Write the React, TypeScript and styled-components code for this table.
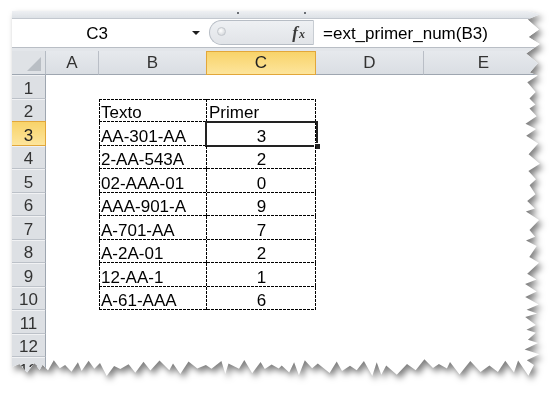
import React from 'react'
import styled, { createGlobalStyle, css } from 'styled-components';

const GlobalStyle = createGlobalStyle`
    html, body {
        margin: 0;
        padding: 0;
        background: #ffffff;
    }
    body {
        font-family: "Liberation Sans", Arial, sans-serif;
    }
`;

// torn paper edge (right + bottom), deterministic
function tornEdge(): string {
    let seed = 4242;
    const rnd = () => { seed = (seed * 16807) % 2147483647; return seed / 2147483647; };
    const pts: string[] = ['0px 0px', '516px 0px'];
    let y = 0;
    while (y < 340) {
        y += 3 + rnd() * 7;
        pts.push(`${(522 + rnd() * 6).toFixed(1)}px ${y.toFixed(1)}px`);
        y += 3 + rnd() * 8;
        pts.push(`${(512 + rnd() * 6).toFixed(1)}px ${y.toFixed(1)}px`);
    }
    pts.push('522px 354px');
    let x = 520;
    while (x > 10) {
        x -= 3 + rnd() * 8;
        pts.push(`${x.toFixed(1)}px ${(357 + rnd() * 8).toFixed(1)}px`);
        x -= 3 + rnd() * 9;
        pts.push(`${x.toFixed(1)}px ${(348 + rnd() * 7).toFixed(1)}px`);
    }
    pts.push('0px 356px');
    return `polygon(${pts.join(', ')})`;
}

const TORN = tornEdge();

const rows: [string, string][] = [
    ['', ''],
    ['Texto', 'Primer'],
    ['AA-301-AA', '3'],
    ['2-AA-543A', '2'],
    ['02-AAA-01', '0'],
    ['AAA-901-A', '9'],
    ['A-701-AA', '7'],
    ['A-2A-01', '2'],
    ['12-AA-1', '1'],
    ['A-61-AAA', '6'],
    ['', ''],
    ['', ''],
    ['', ''],
];

const columns = ['A', 'B', 'C', 'D', 'E'];

export default function App() {
    return (
        <>
            <GlobalStyle />
            <Page>
                <Shadow>
                    <Paper>
                        <TopStrip>
                            <Speck $x={225} />
                            <Speck $x={292} />
                        </TopStrip>

                        <FormulaBar>
                            <NameBox>C3</NameBox>
                            <DropButton><Arrow /></DropButton>
                            <Grip>
                                <Dimple />
                                <Fx>f<span>x</span></Fx>
                            </Grip>
                            <FormulaInput>=ext_primer_num(B3)</FormulaInput>
                        </FormulaBar>

                        <Divider />

                        <Sheet>
                            <Corner><CornerMark /></Corner>
                            {columns.map(c => (
                                <ColHeader key={c} $active={c === 'C'}>{c}</ColHeader>
                            ))}

                            {rows.map(([b, c], i) => {
                                const n = i + 1;
                                const inTable = n >= 2 && n <= 10;
                                return (
                                    <React.Fragment key={n}>
                                        <RowHeader $active={n === 3}>{n}</RowHeader>
                                        <Cell />
                                        <Cell $boxed={inTable} $top={n === 2} $left>{b}</Cell>
                                        <Cell $boxed={inTable} $top={n === 2} $center={n > 2}>
                                            {c}
                                            {n === 3 && <Selection><FillHandle /></Selection>}
                                        </Cell>
                                        <Cell />
                                        <Cell />
                                    </React.Fragment>
                                )
                            })}
                        </Sheet>
                    </Paper>
                </Shadow>
            </Page>
        </>
    )
}

const Page = styled.div`
    width: 560px;
    height: 398px;
    box-sizing: border-box;
    padding: 11px 0 0 12px;
    overflow: hidden;
    background: #ffffff;
`;

const Shadow = styled.div`
    width: 530px;
    height: 370px;
    filter: drop-shadow(3px 4px 3px rgba(0, 0, 0, 0.5));
`;

const Paper = styled.div`
    width: 530px;
    height: 370px;
    overflow: hidden;
    background: #ffffff;
    clip-path: ${TORN};
    display: flex;
    flex-direction: column;
`;

const TopStrip = styled.div`
    position: relative;
    flex: 0 0 8px;
    background: linear-gradient(to bottom, #eef0f3, #dde1e6);
    border-bottom: 1px solid #c3c8cf;
    box-sizing: border-box;
`;

const Speck = styled.span<{ $x: number }>`
    position: absolute;
    top: 1px;
    left: ${p => p.$x}px;
    width: 2px;
    height: 2px;
    background: #6b6f75;
`;

const FormulaBar = styled.div`
    flex: 0 0 28px;
    display: flex;
    align-items: stretch;
    background: #ffffff;
    font-size: 17px;
    color: #000;
`;

const NameBox = styled.div`
    width: 170px;
    display: flex;
    align-items: center;
    justify-content: center;
    padding-top: 1px;
`;

const DropButton = styled.div`
    width: 25px;
    display: flex;
    align-items: center;
    justify-content: center;
    padding-left: 3px;
    box-sizing: border-box;
`;

const Arrow = styled.span`
    width: 0;
    height: 0;
    border-left: 4px solid transparent;
    border-right: 4px solid transparent;
    border-top: 4px solid #1e1e1e;
`;

const Grip = styled.div`
    position: relative;
    width: 105px;
    margin: 1px 0 2px 2px;
    box-sizing: border-box;
    border: 1px solid #b7bdc5;
    border-radius: 13px 0 0 13px;
    background: linear-gradient(to bottom, #eef0f3, #e1e4e8);
    display: flex;
    align-items: center;
    justify-content: flex-end;
    padding-right: 8px;
    border-right: 1px solid #c8cdd3;
`;

const Dimple = styled.span`
    position: absolute;
    left: 7px;
    top: 6px;
    width: 7px;
    height: 7px;
    border-radius: 50%;
    background: radial-gradient(circle at 40% 40%, #ffffff, #c9cdd2);
    border: 1px solid #c3c7cc;
`;

const Fx = styled.span`
    font-family: "Liberation Serif", "Times New Roman", serif;
    font-style: italic;
    font-weight: bold;
    font-size: 17px;
    color: #3a3a3a;

    span {
        font-size: 12px;
        margin-left: 1px;
    }
`;

const FormulaInput = styled.div`
    flex: 1;
    display: flex;
    align-items: center;
    padding: 1px 0 0 8px;
    border-left: 1px solid #ffffff;
    white-space: nowrap;
`;

const Divider = styled.div`
    flex: 0 0 4px;
    box-sizing: border-box;
    border-top: 1px solid #b9bec5;
    background: #e3e6ea;
`;

const Sheet = styled.div`
    display: grid;
    grid-template-columns: 34px 53px 108px 109px 108px 120px;
    grid-template-rows: 24px;
    grid-auto-rows: 23.5px;
    font-size: 17px;
`;

const headerBase = css`
    display: flex;
    align-items: flex-end;
    justify-content: center;
    box-sizing: border-box;
    color: #333333;
    line-height: 19px;
`;

const activeHeader = css`
    background: linear-gradient(to bottom, #f8d36a, #fde59c);
    border-color: #e2a73a;
    color: #222222;
`;

const Corner = styled.div`
    position: relative;
    box-sizing: border-box;
    background: #dfe2e6;
    border-right: 1px solid #b5bbc3;
    border-bottom: 1px solid #9ea6b0;
`;

const CornerMark = styled.span`
    position: absolute;
    right: 4px;
    bottom: 3px;
    width: 0;
    height: 0;
    border-left: 14px solid transparent;
    border-bottom: 14px solid #b9bec4;
`;

const ColHeader = styled.div<{ $active?: boolean }>`
    ${headerBase};
    padding-bottom: 2px;
    background: linear-gradient(to bottom, #e6e9ed, #dadee3);
    border-right: 1px solid #b9bec6;
    border-bottom: 1px solid #9ea6b0;
    ${p => p.$active && css`
        ${activeHeader};
        border-top: 1px solid #e2a73a;
        border-left: 1px solid #e2a73a;
        margin-left: -1px;
    `}
`;

const RowHeader = styled.div<{ $active?: boolean }>`
    ${headerBase};
    background: #dde0e4;
    border-right: 1px solid #9ea6b0;
    border-bottom: 1px solid #bcc1c8;
    box-shadow: inset 0 1px 0 #f1f2f4;
    ${p => p.$active && css`
        ${activeHeader};
        box-shadow: none;
        border-top: 1px solid #e2a73a;
        margin-top: -1px;
    `}
`;

const dashH = 'repeating-linear-gradient(to right, #000 0 3px, transparent 3px 4px)';
const dashV = 'repeating-linear-gradient(to bottom, #000 0 3px, transparent 3px 4px)';

const Cell = styled.div<{ $boxed?: boolean, $top?: boolean, $left?: boolean, $center?: boolean }>`
    position: relative;
    display: flex;
    align-items: flex-end;
    justify-content: ${p => p.$center ? 'center' : 'flex-start'};
    padding-left: ${p => p.$center ? '0' : '2px'};
    box-sizing: border-box;
    color: #000;
    line-height: 19px;
    white-space: nowrap;
    background-repeat: no-repeat;

    ${p => p.$boxed && css`
        background-image:
            ${dashH}, ${dashV}
            ${p.$top ? `, ${dashH}` : ''}
            ${p.$left ? `, ${dashV}` : ''};
        background-size:
            100% 1px, 1px 100%
            ${p.$top ? ', 100% 1px' : ''}
            ${p.$left ? ', 1px 100%' : ''};
        background-position:
            left bottom, right top
            ${p.$top ? ', left top' : ''}
            ${p.$left ? ', left top' : ''};
    `}
`;

const Selection = styled.div`
    position: absolute;
    top: -1px;
    bottom: -1px;
    left: -2px;
    right: -2px;
    border: 2px solid #222222;
    pointer-events: none;
`;

const FillHandle = styled.span`
    position: absolute;
    right: -5px;
    bottom: -5px;
    width: 5px;
    height: 5px;
    background: #222222;
    border: 1px solid #ffffff;
`;
